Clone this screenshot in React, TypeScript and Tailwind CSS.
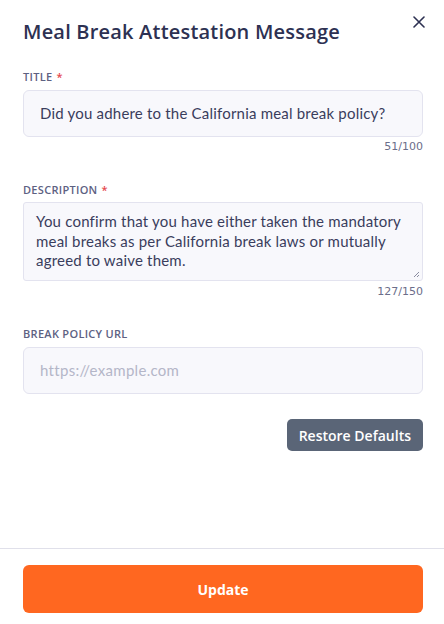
import React from "react";

const font = { fontFamily: "Lato, 'Noto Sans', sans-serif" };
const wide = { fontFamily: "'Open Sans', 'Noto Sans', sans-serif" };

function Label({ text, required }: { text: string; required?: boolean }) {
  return (
    <div
      className="text-[11px] leading-[14px] font-semibold tracking-[0.3px] text-[#5d6182] uppercase"
      style={wide}
    >
      {text}
      {required && <span className="text-[#e5484d] ml-[4px]">*</span>}
    </div>
  );
}

function Counter({ text }: { text: string }) {
  return (
    <div
      className="text-right text-[11px] leading-[14px] text-[#6b6e8a]"
      style={{ fontFamily: "'DejaVu Sans', sans-serif" }}
    >
      {text}
    </div>
  );
}

export default function App() {
  return (
    <div className="w-[444px] h-[624px] bg-white flex flex-col relative" style={font}>
      <button className="absolute top-[16px] right-[19px] w-[12px] h-[12px] text-[#2d3152]">
        <svg viewBox="0 0 12 12" width="12" height="12" fill="none" stroke="currentColor" strokeWidth="1.6" strokeLinecap="round">
          <path d="M1 1 L11 11 M11 1 L1 11" />
        </svg>
      </button>
      <div className="flex-1 pl-[23px] pr-[21px] pt-[20px]">
        <h1 className="text-[20px] leading-[24px] font-semibold tracking-[0.2px] text-[#2d3152]" style={wide}>
          Meal Break Attestation Message
        </h1>

        <div className="mt-[26px]">
          <Label text="Title" required />
          <div className="mt-[6px] h-[47px] rounded-[6px] border border-[#e3e3ef] bg-[#f8f8fc] flex items-center pl-[16px] text-[15px] tracking-[0.2px] text-[#3a3d5c]">
            Did you adhere to the California meal break policy?
          </div>
          <div className="mt-[3px]">
            <Counter text="51/100" />
          </div>
        </div>

        <div className="mt-[29px]">
          <Label text="Description" required />
          <div className="mt-[5px] relative h-[79px] rounded-[3px] border border-[#e3e3ef] bg-[#f8f8fc] pl-[12px] pr-[10px] pt-[9px] text-[15px] tracking-[0.2px] leading-[19.5px] text-[#3a3d5c]">
            You confirm that you have either taken the mandatory meal breaks as per California break laws or mutually agreed to waive them.
            <svg className="absolute right-[2px] bottom-[2px]" width="7" height="7" viewBox="0 0 7 7" stroke="#8a8ca0" strokeWidth="1">
              <path d="M1 6 L6 1 M4 6 L6 4" />
            </svg>
          </div>
          <div className="mt-[4px]">
            <Counter text="127/150" />
          </div>
        </div>

        <div className="mt-[28px]">
          <Label text="Break Policy URL" />
          <div className="mt-[6px] h-[47px] rounded-[6px] border border-[#e3e3ef] bg-[#f8f8fc] flex items-center pl-[16px] text-[15px] tracking-[0.3px] text-[#b4b6c8]">
            https://example.com
          </div>
        </div>

        <div className="mt-[25px] flex justify-end">
          <button className="h-[32px] px-[12px] rounded-[5px] bg-[#5a6577] text-white text-[14px] font-semibold" style={wide}>
            Restore Defaults
          </button>
        </div>
      </div>
      <div className="border-t border-[#e0e0ea] pl-[23px] pr-[21px] pt-[16px] pb-[11px]">
        <button className="w-full h-[48px] rounded-[6px] bg-[#ff6720] text-white text-[14px] font-bold" style={wide}>
          Update
        </button>
      </div>
    </div>
  );
}
